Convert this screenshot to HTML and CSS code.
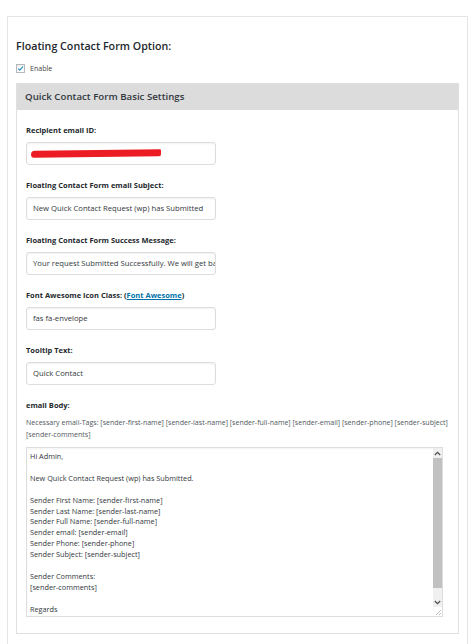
FILE: index.html
```html
<!DOCTYPE html>
<html>
<head>
<meta charset="utf-8">
<link rel="stylesheet" href="styles.css">
</head>
<body>
<div class="card">
  <h2 class="title">Floating Contact Form Option:</h2>
  <label class="enable">
    <span class="check"><svg viewBox="0 0 10 10" width="9" height="9"><path d="M1.8 5.2 L4 7.4 L8.4 2.4" fill="none" stroke="#1e8cbe" stroke-width="1.6"/></svg></span>
    <span>Enable</span>
  </label>
  <div class="panel">
    <div class="panel-head">Quick Contact Form Basic Settings</div>
    <div class="panel-body">
      <div class="field">
        <div class="label">Recipient email ID:</div>
        <div class="input"><span class="redact"></span></div>
      </div>
      <div class="field">
        <div class="label">Floating Contact Form email Subject:</div>
        <div class="input">New Quick Contact Request (wp) has Submitted</div>
      </div>
      <div class="field">
        <div class="label">Floating Contact Form Success Message:</div>
        <div class="input">Your request Submitted Successfully. We will get bac</div>
      </div>
      <div class="field">
        <div class="label">Font Awesome Icon Class: (<a class="link">Font Awesome</a>)</div>
        <div class="input">fas fa-envelope</div>
      </div>
      <div class="field">
        <div class="label">Tooltip Text:</div>
        <div class="input">Quick Contact</div>
      </div>
      <div class="label">email Body:</div>
      <p class="tags">Necessary email-Tags: [sender-first-name] [sender-last-name] [sender-full-name] [sender-email] [sender-phone] [sender-subject]<br>[sender-comments]</p>
      <div class="textarea">
        <div class="ta-text">Hi Admin,

New Quick Contact Request (wp) has Submitted.

Sender First Name: [sender-first-name]
Sender Last Name: [sender-last-name]
Sender Full Name: [sender-full-name]
Sender email: [sender-email]
Sender Phone: [sender-phone]
Sender Subject: [sender-subject]

Sender Comments:
[sender-comments]

Regards</div>
        <div class="scrollbar">
          <div class="sb-btn"><svg viewBox="0 0 7 5" width="7" height="5"><path d="M0.8 4 L3.5 1.3 L6.2 4" fill="none" stroke="#505050" stroke-width="1.3"/></svg></div>
          <div class="sb-track"><div class="sb-thumb"></div></div>
          <div class="sb-btn"><svg viewBox="0 0 7 5" width="7" height="5"><path d="M0.8 1 L3.5 3.7 L6.2 1" fill="none" stroke="#505050" stroke-width="1.3"/></svg></div>
          <div class="sb-corner"><svg viewBox="0 0 8 8" width="8" height="8"><path d="M7 2 L2 7 M7 5 L5 7" stroke="#b0b0b0" stroke-width="0.8"/></svg></div>
        </div>
      </div>
    </div>
  </div>
</div>
</body>
</html>
```
FILE: styles.css
```css
html, body {
  margin: 0;
  padding: 0;
  background: #ffffff;
}
body {
  font-family: "Open Sans", "Liberation Sans", sans-serif;
  color: #32373c;
  padding: 16px 7px 0 7px;
  height: 644px;
  box-sizing: border-box;
  overflow: hidden;
}
.card {
  width: 461px;
  height: 628px;
  box-sizing: border-box;
  border: 1px solid #e5e5e5;
  border-bottom: none;
  padding: 17px 8px 0 8px;
  overflow: hidden;
}
.title {
  margin: 0;
  font-size: 10.7px;
  font-weight: 600;
  line-height: 24px;
  color: #23282d;
}
.enable {
  display: flex;
  align-items: center;
  gap: 5px;
  margin-top: 4px;
  font-size: 7.1px;
  color: #444;
  height: 12px;
}
.check {
  width: 9px;
  height: 9px;
  border: 1px solid #b4b9be;
  box-sizing: border-box;
  display: flex;
  align-items: center;
  justify-content: center;
  background: #fff;
  box-shadow: inset 0 1px 2px rgba(0,0,0,0.1);
}
.check svg { display: block; }
.panel {
  margin-top: 9px;
  border: 1px solid #e0e0e0;
  width: 443px;
  box-sizing: border-box;
}
.panel-head {
  background: #dcdcdc;
  height: 26px;
  line-height: 26px;
  padding-left: 8px;
  font-size: 9.7px;
  font-weight: 600;
  color: #32373c;
}
.panel-body {
  padding: 14px 9px 16px 9px;
}
.field {
  margin-bottom: 14px;
}
.label {
  font-size: 7.5px;
  font-weight: 700;
  line-height: 12px;
  color: #23282d;
}
.link {
  color: #0073aa;
  text-decoration: underline;
}
.input {
  margin-top: 6px;
  width: 190px;
  height: 23px;
  box-sizing: border-box;
  border: 1px solid #dddddd;
  border-radius: 3px;
  box-shadow: inset 0 1px 2px rgba(0,0,0,0.06);
  padding: 0 1px 0 6px;
  font-size: 7.7px;
  line-height: 21px;
  white-space: nowrap;
  overflow: hidden;
  color: #32373c;
  display: flex;
  align-items: center;
}
.redact {
  display: block;
  width: 130px;
  height: 7px;
  background: #ec1c24;
  border-radius: 4px 1px 2px 3px;
  margin-left: -2px;
  transform: rotate(-0.6deg);
}
.tags {
  margin: 5px 0 0 0;
  font-size: 7.05px;
  line-height: 12px;
  color: #50575e;
  white-space: nowrap;
}
.textarea {
  margin-top: 7px;
  width: 417px;
  height: 170px;
  box-sizing: border-box;
  border: 1px solid #dddddd;
  display: flex;
  overflow: hidden;
  box-shadow: inset 0 1px 2px rgba(0,0,0,0.05);
}
.ta-text {
  flex: 1;
  white-space: pre;
  font-size: 7.3px;
  line-height: 10.9px;
  padding: 3px 3px 0 3px;
  color: #32373c;
  overflow: hidden;
}
.scrollbar {
  width: 9px;
  display: flex;
  flex-direction: column;
  background: #f0f0f0;
}
.sb-btn {
  height: 10px;
  display: flex;
  align-items: center;
  justify-content: center;
}
.sb-track {
  flex: 1;
}
.sb-thumb {
  height: 130px;
  background: #c1c1c1;
}
.sb-corner {
  height: 9px;
  background: #fff;
  display: flex;
  align-items: flex-end;
  justify-content: flex-end;
}
```
